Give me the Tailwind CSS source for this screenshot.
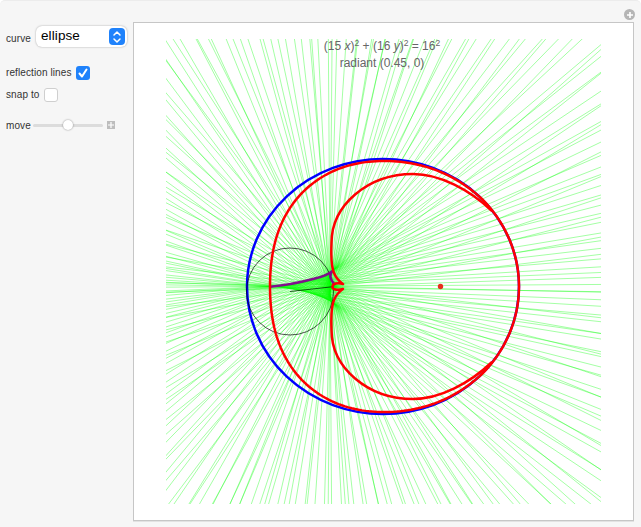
<!DOCTYPE html>
<html>
<head>
<meta charset="utf-8">
<script src="https://cdn.jsdelivr.net/npm/@tailwindcss/browser@4"></script>
</head>
<body class="m-0 bg-white">
<div class="flex w-[641px] h-[527px] overflow-hidden bg-[#f6f6f6] rounded-t-[5px] border-t border-[#ececec] font-['Liberation_Sans',Arial,sans-serif] text-[#333]">
  <aside class="w-[133px] shrink-0 pl-[6px] pt-[25px] flex flex-col">
    <div class="flex items-center h-[21px] text-[10px] tracking-[0.1px]">
      <span class="w-[30px] mt-[3px]">curve</span>
      <div class="w-[91px] h-[21px] bg-white rounded-[6px] shadow-[0_0_2px_rgba(0,0,0,0.35)] flex items-center justify-between pl-[5px] pr-[2px]">
        <span class="text-[13.5px] text-black">ellipse</span>
        <span class="w-[16px] h-[17px] rounded-[4px] bg-[#1f82fb] flex items-center justify-center">
          <svg width="10" height="14" viewBox="0 0 10 14" fill="none" stroke="white" stroke-width="1.5" stroke-linecap="round" stroke-linejoin="round"><path d="M2 5 5 2 8 5"/><path d="M2 9 5 12 8 9"/></svg>
        </span>
      </div>
    </div>
    <div class="flex items-center h-[15px] mt-[18px] text-[10px] tracking-[0.1px]">
      <span class="w-[70px]">reflection lines</span>
      <span class="w-[14px] h-[14px] rounded-[3px] bg-[#1f82fb] flex items-center justify-center">
        <svg width="12" height="12" viewBox="0 0 12 12" fill="none" stroke="white" stroke-width="2" stroke-linecap="round" stroke-linejoin="round"><path d="M2.5 6.5 5 9.5 9.5 2.5"/></svg>
      </span>
    </div>
    <div class="flex items-center h-[15px] mt-[7px] text-[10px] tracking-[0.1px]">
      <span class="w-[38px]">snap to</span>
      <span class="w-[14px] h-[14px] rounded-[3px] bg-white border border-[#cfcfcf]"></span>
    </div>
    <div class="flex items-center h-[12px] mt-[17px] text-[10px] tracking-[0.1px]">
      <span class="w-[27px]">move</span>
      <div class="relative w-[70px] h-[3px] rounded-full bg-[#dcdcdc]">
        <span class="absolute left-[30px] top-[-4px] w-[10px] h-[10px] rounded-full bg-white shadow-[0_0_2px_rgba(0,0,0,0.45)]"></span>
      </div>
      <span class="ml-[4px] w-[8px] h-[8px] bg-[#bdbdbd] relative flex items-center justify-center">
        <svg width="6" height="6" viewBox="0 0 6 6" stroke="white" stroke-width="1.2"><path d="M3 0V6M0 3H6"/></svg>
      </span>
    </div>
  </aside>
  <main class="relative flex-1 mt-[21px] mb-[6px] mr-[7px] flex flex-col">
    <div class="relative flex-1 bg-white border border-[#c6c6c6] shadow-[0_1px_0_#e2e2e2]">
      <svg id="plot" class="absolute left-[-1px] top-[-1px]" width="501" height="499" viewBox="133 22 501 499" fill="none">
        <svg x="166" y="39" width="435" height="465" viewBox="166 39 435 465">
          <g id="rays" stroke="#00ff00" stroke-opacity="0.4" stroke-width="0.9"></g>
        </svg>
        <ellipse cx="383" cy="286.5" rx="136" ry="127.5" stroke="#0000ff" stroke-width="2.5"/>
        <circle cx="290" cy="291.5" r="43.5" stroke="#000" stroke-opacity="0.75" stroke-width="0.9"/>
        <path d="M290 291.5 332 286.8" stroke="#000" stroke-opacity="0.75" stroke-width="0.9"/>
        <path id="purple" stroke="#800f8c" stroke-width="2.4" d="M270 286.7C285 285.5 300 282.5 315 278.5S328 273.5 332.5 271C329 274.5 329.5 279 335 285"/>
        <path id="red" stroke="#ff0000" stroke-width="2.5" stroke-linejoin="round"/>
        <path stroke="#ff0000" stroke-width="2.5" stroke-linejoin="round" d="M492 211C470 190 440 174 413 174C368 174 331.5 205 331.5 243C331 255 331 266 334 273S340 282 343 284C337 282 333 284 332.5 286.5S337 291 343 289C340 291 336 295 334 300C331 307 331 318 331.5 330C331.5 368 368 399 413 399C440 399 470 383 492 362"/>
        <circle cx="440.5" cy="286.5" r="2.7" fill="#e8301c"/>
      </svg>
      <div class="absolute left-[148px] top-[15px] w-[200px] text-center text-[12px] leading-[17px] text-[#666]">
        <div>(15 <i>x</i>)<sup class="text-[8.5px]">2</sup> + (16 <i>y</i>)<sup class="text-[8.5px]">2</sup> = 16<sup class="text-[8.5px]">2</sup></div>
        <div>radiant (0.45, 0)</div>
      </div>
    </div>
  </main>
  <span class="absolute left-[624px] top-[9px] w-[11px] h-[11px] rounded-full bg-[#b5b5b5] flex items-center justify-center">
    <svg width="8" height="8" viewBox="0 0 8 8" stroke="white" stroke-width="1.6"><path d="M4 1V7M1 4H7"/></svg>
  </span>
</div>
<script>
var cx=383,cy=286.5,s=127.5,a=16/15,b=1,rx=0.45;
var g=document.getElementById('rays'),N=130,d='',seed=7;
function rnd(){seed=(seed*16807)%2147483647;return seed/2147483647;}
for(var i=0;i<N;i++){
  var t=2*Math.PI*(i+0.5+(rnd()-0.5)*0.5)/N,X=a*Math.cos(t),Y=b*Math.sin(t);
  var nx=Math.cos(t)/a,ny=Math.sin(t)/b,nl=Math.hypot(nx,ny);nx/=nl;ny/=nl;
  var vx=X-rx,vy=Y,vl=Math.hypot(vx,vy);vx/=vl;vy/=vl;
  var k=2*(vx*nx+vy*ny),dx=vx-k*nx,dy=vy-k*ny,T=6;
  d+='M'+(cx+s*(X-T*dx)).toFixed(2)+' '+(cy-s*(Y-T*dy)).toFixed(2)+'L'+(cx+s*(X+T*dx)).toFixed(2)+' '+(cy-s*(Y+T*dy)).toFixed(2);
}
var p=document.createElementNS('http://www.w3.org/2000/svg','path');p.setAttribute('d',d);g.appendChild(p);
// outer red curve: the ellipse pulled inward along its normal
var up='',lo='';
for(var j=0;j<=120;j++){
  var u=Math.PI*j/120,c=Math.cos(u),sn=Math.sin(u),n1=c/a,n2=sn/b,l=Math.hypot(n1,n2);n1/=l;n2/=l;
  var del=u>=Math.PI/2?2+21*Math.pow(Math.abs(c),3):(u>0.75?2*(u-0.75)/0.82:0);
  var qx=cx+s*a*c-del*n1,qy=s*b*sn-del*n2;
  up+=(j?'L':'M')+qx.toFixed(2)+' '+(cy-qy).toFixed(2);
  lo+=(j?'L':'M')+qx.toFixed(2)+' '+(cy+qy).toFixed(2);
}
document.getElementById('red').setAttribute('d',up+lo);
</script>
</body>
</html>
